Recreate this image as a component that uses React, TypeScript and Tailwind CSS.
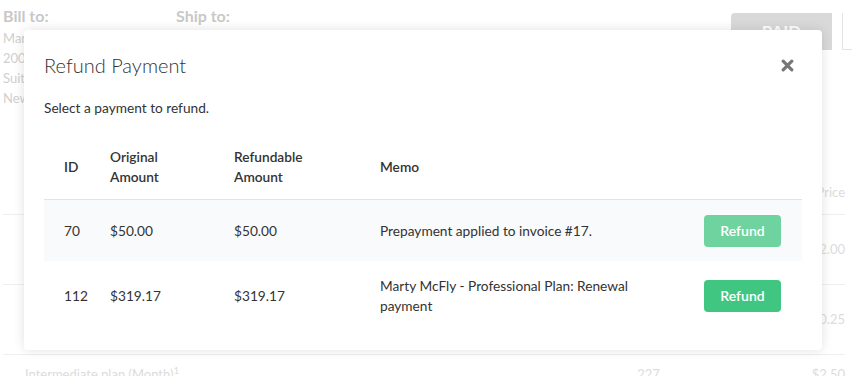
const payments = [
    { id: 70, original: '$50.00', refundable: '$50.00', memo: 'Prepayment applied to invoice #17.', disabled: true },
    { id: 112, original: '$319.17', refundable: '$319.17', memo: 'Marty McFly - Professional Plan: Renewal payment', disabled: false },
];

const Background = () => (
    <div className="pl-[3px] pr-[7px] text-[#cfcfcf]">
        <div className="flex">
            <div className="w-[173px] pt-[5px]">
                <div className="text-[16px] font-bold leading-[22px] text-[#c8c8c8]">Bill to:</div>
                <div className="mt-[1px] text-[13px] leading-[20px]">
                    <div>Marty McFly</div>
                    <div>2000 Hill Valley Rd</div>
                    <div>Suite 1985</div>
                    <div>New York, NY</div>
                </div>
            </div>
            <div className="pt-[5px] text-[16px] font-bold leading-[22px] text-[#c8c8c8]">Ship to:</div>
            <div className="-mr-[10px] ml-auto mt-[13px] flex h-[37px]">
                <div className="flex w-[101px] items-center justify-center rounded-tl-[4px] bg-[#d9d9d9] text-[17px] font-bold text-white">
                    PAID
                </div>
                <div className="ml-[10px] w-[13px] border-b border-l border-[#e3e3e3]" />
            </div>
        </div>

        {/* invoice lines */}
        <div className="mt-[64px] flex h-[43px] items-center justify-end border-b border-[#efefef] text-[13px] text-[#dcdcdc]">
            Price
        </div>
        <div className="flex h-[70px] items-center justify-end border-b border-[#efefef] text-[13px] text-[#dcdcdc]">
            $2.00
        </div>
        <div className="flex h-[70px] items-center justify-end border-b border-[#efefef] text-[13px] text-[#dcdcdc]">
            $0.25
        </div>
        <div className="flex h-[40px] items-center text-[13px] text-[#dcdcdc]">
            <span className="ml-[22px]">Intermediate plan (Month)<sup>1</sup></span>
            <span className="ml-auto mr-[152px]">227</span>
            <span>$2.50</span>
        </div>
    </div>
);

const CloseIcon = () => (
    <svg width="13" height="13" viewBox="0 0 13 13">
        <path d="M2.2 2.2 L10.8 10.8 M10.8 2.2 L2.2 10.8" stroke="#777" strokeWidth="3.2" strokeLinecap="round" />
    </svg>
);

const RefundModal = () => (
    <div className="absolute left-[24px] top-[30px] h-[320px] w-[798px] rounded-[4px] bg-white px-[20px] pt-[22px] shadow-[0_0_12px_rgba(0,0,0,0.12)]">
        <div className="flex h-[26px] items-center justify-between">
            <h2 className="text-[20px] font-light leading-[26px] text-[#333]">Refund Payment</h2>
            <button className="mr-[8px]">
                <CloseIcon />
            </button>
        </div>
        <p className="mt-[20px] text-[13.7px] leading-[20px] text-[#333]">Select a payment to refund.</p>

        <div className="mt-[16px] text-[13.7px] leading-[20px] text-[#333]">
            <div className="grid h-[66px] grid-cols-[66px_124px_146px_304px_1fr] items-center border-b border-[#dfe3ea] font-semibold">
                <div className="pl-[20px]">ID</div>
                <div>Original<br />Amount</div>
                <div>Refundable<br />Amount</div>
                <div>Memo</div>
                <div />
            </div>
            {payments.map((p, i) => (
                <div
                    key={p.id}
                    className={`grid grid-cols-[66px_124px_146px_304px_1fr] items-center ${i % 2 === 0 ? 'h-[61px] bg-[#f9fafb]' : 'h-[70px]'}`}
                >
                    <div className="pl-[20px]">{p.id}</div>
                    <div>{p.original}</div>
                    <div>{p.refundable}</div>
                    <div className="pr-[20px]">{p.memo}</div>
                    <div className="pl-[20px]">
                        <button
                            className={`h-[32px] w-[77px] rounded-[4px] text-[14px] font-semibold text-white ${p.disabled ? 'bg-[#6fd3a0]' : 'bg-[#41c682]'}`}
                        >
                            Refund
                        </button>
                    </div>
                </div>
            ))}
        </div>
    </div>
);

export default function App() {
    return (
        <div className="relative h-[376px] w-[852px] overflow-hidden bg-white font-['Lato','Liberation_Sans',sans-serif]">
            <Background />
            <RefundModal />
        </div>
    );
}
